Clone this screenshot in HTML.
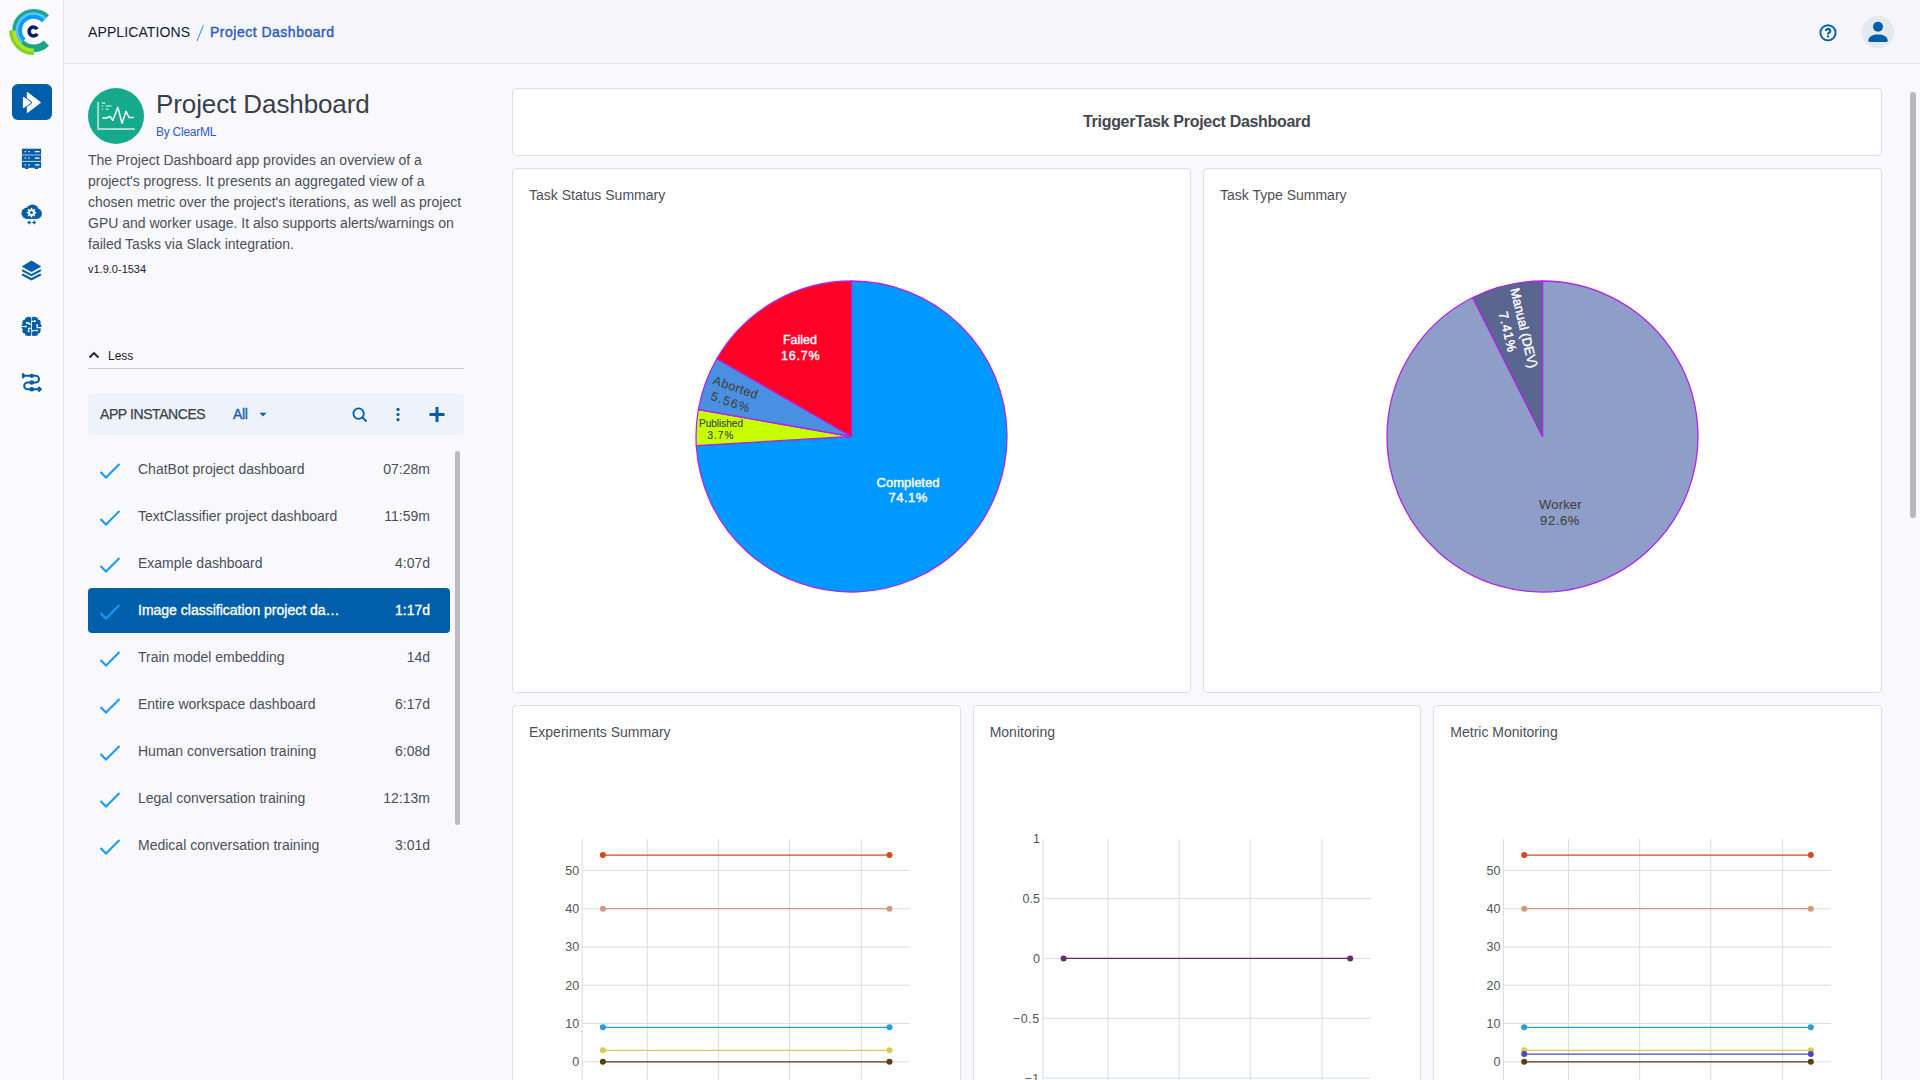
<!DOCTYPE html><html><head><meta charset="utf-8"><style>
*{box-sizing:border-box;margin:0;padding:0}
html,body{width:1920px;height:1080px;overflow:hidden;background:#f9f9fd;font-family:"Liberation Sans", sans-serif}
.a{position:absolute}
.t{position:absolute;white-space:nowrap;line-height:1}
.card{position:absolute;background:#fff;border:1px solid #dcdfe3;border-radius:4px}
</style></head><body><div class="a" style="left:0;top:0;width:64px;height:1080px;background:#fbfbfd;border-right:1px solid #e3e6ef"></div>
<div class="a" style="left:64px;top:0;width:1856px;height:64px;background:#f5f5fa;border-bottom:1px solid #e3e6ef"></div>
<svg class="a" style="left:0;top:0" width="64" height="64" viewBox="0 0 64 64"><path d="M46.35,17.95 A17.75,17.75 0 1 0 46.35,43.05" fill="none" stroke="#17a58b" stroke-width="7.5"/><path d="M45.50,18.80 A16.55,16.55 0 1 0 22.10,42.20" fill="none" stroke="#5bc0fb" stroke-width="2.9"/><path d="M43.20,21.10 A13.3,13.3 0 1 0 24.40,39.90" fill="none" stroke="#0a9bf7" stroke-width="3.6"/><path d="M10.75,30.50 A23.05,23.05 0 0 0 33.80,53.55" fill="none" stroke="#7ed321" stroke-width="3.1"/><path d="M14.05,30.50 A19.75,19.75 0 0 0 33.80,50.25" fill="none" stroke="#b6e41a" stroke-width="3.5"/><path d="M37.23,29.17 A4.4,4.4 0 1 0 37.23,33.83" fill="none" stroke="#0c1a6b" stroke-width="3.5"/></svg>
<div class="a" style="left:12px;top:84px;width:40px;height:36px;background:#005eaa;border-radius:6px"></div>
<svg class="a" style="left:12px;top:84px" width="40" height="36" viewBox="0 0 40 36">
<path d="M15.4,8.6 L28.2,18.5 L15.4,28.4 Z" fill="#fff" stroke="#fff" stroke-width="1.2" stroke-linejoin="round"/>
<path d="M11.5,13.6 L18.4,18.5 L11.5,23.4 Z" fill="#005eaa" stroke="#005eaa" stroke-width="3" stroke-linejoin="round"/>
<path d="M11.5,13.6 L18.4,18.5 L11.5,23.4 Z" fill="#fff" stroke="#fff" stroke-width="1.2" stroke-linejoin="round"/>
</svg>
<svg class="a" style="left:21px;top:147px" width="22" height="24" viewBox="0 0 22 24">
<rect x="0.9" y="1.7" width="19.2" height="19.15" fill="#005eaa"/>
<rect x="0.9" y="7.1" width="19.2" height="1.7" fill="#6d9bc3"/>
<rect x="0.9" y="13.9" width="19.2" height="1" fill="#c5d3e0"/>
<rect x="3.9" y="20.5" width="3.6" height="1.5" rx="0.4" fill="#005eaa"/><rect x="13.6" y="20.5" width="3.7" height="1.5" rx="0.4" fill="#005eaa"/>
<g fill="#fff"><rect x="3.75" y="3.95" width="1.3" height="1.3"/><rect x="7.35" y="3.95" width="1.3" height="1.3"/><rect x="13.85" y="3.95" width="4.65" height="1.3"/>
<rect x="3.75" y="10.45" width="1.3" height="1.3"/><rect x="7.35" y="10.45" width="1.3" height="1.3"/><rect x="13.85" y="10.45" width="4.65" height="1.3"/>
<rect x="3.75" y="17.25" width="1.3" height="1.3"/><rect x="7.35" y="17.25" width="1.3" height="1.3"/><rect x="13.85" y="17.25" width="4.65" height="1.3"/></g>
</svg>
<svg class="a" style="left:18px;top:200px" width="28" height="28" viewBox="0 0 28 28">
<g fill="#005eaa"><circle cx="9.2" cy="13.2" r="5.7"/><circle cx="14.5" cy="10.6" r="6.2"/><circle cx="18.6" cy="13.6" r="5.3"/><rect x="9.2" y="12" width="9.4" height="6.9"/></g>
<circle cx="13.5" cy="12.6" r="3.3" fill="#fff"/><rect x="12.7" y="7.9" width="1.6" height="2.2" fill="#fff" transform="rotate(0 13.5 12.6)"/><rect x="12.7" y="7.9" width="1.6" height="2.2" fill="#fff" transform="rotate(45 13.5 12.6)"/><rect x="12.7" y="7.9" width="1.6" height="2.2" fill="#fff" transform="rotate(90 13.5 12.6)"/><rect x="12.7" y="7.9" width="1.6" height="2.2" fill="#fff" transform="rotate(135 13.5 12.6)"/><rect x="12.7" y="7.9" width="1.6" height="2.2" fill="#fff" transform="rotate(180 13.5 12.6)"/><rect x="12.7" y="7.9" width="1.6" height="2.2" fill="#fff" transform="rotate(225 13.5 12.6)"/><rect x="12.7" y="7.9" width="1.6" height="2.2" fill="#fff" transform="rotate(270 13.5 12.6)"/><rect x="12.7" y="7.9" width="1.6" height="2.2" fill="#fff" transform="rotate(315 13.5 12.6)"/>
<circle cx="13.5" cy="12.6" r="1.5" fill="#005eaa"/>
<path d="M8.850000000000001,22.55 Q10.575000000000001,21.975 11.15,20.25 Q11.725,21.975 13.45,22.55 Q11.725,23.125 11.15,24.85 Q10.575000000000001,23.125 8.850000000000001,22.55 Z M13.899999999999999,22.55 Q15.625,21.975 16.2,20.25 Q16.775,21.975 18.5,22.55 Q16.775,23.125 16.2,24.85 Q15.625,23.125 13.899999999999999,22.55 Z" fill="#005eaa"/>
</svg>
<svg class="a" style="left:21px;top:259px" width="22" height="23" viewBox="0 0 22 23">
<path d="M10.5,2 L19.6,7.5 L10.5,12.6 L1.4,7.5 Z" fill="#005eaa" stroke="#005eaa" stroke-width="0.9" stroke-linejoin="round"/>
<path d="M1.9,11.6 L10.5,16.1 L19.1,11.6" fill="none" stroke="#005eaa" stroke-width="2.2" stroke-linecap="round" stroke-linejoin="round"/>
<path d="M1.9,15.8 L10.5,20.3 L19.1,15.8" fill="none" stroke="#005eaa" stroke-width="2.2" stroke-linecap="round" stroke-linejoin="round"/>
</svg>
<svg class="a" style="left:18px;top:312px" width="28" height="28" viewBox="0 0 28 28">
<g fill="#005eaa"><circle cx="10.60" cy="7.9" r="3.1"/><circle cx="7.60" cy="10.8" r="3.3"/><circle cx="6.20" cy="14.6" r="2.8"/><circle cx="7.60" cy="18.4" r="3.2"/><circle cx="10.60" cy="20.8" r="3.1"/><rect x="7.20" y="6" width="6" height="17.5"/><circle cx="16.40" cy="7.9" r="3.1"/><circle cx="19.40" cy="10.8" r="3.3"/><circle cx="20.80" cy="14.6" r="2.8"/><circle cx="19.40" cy="18.4" r="3.2"/><circle cx="16.40" cy="20.8" r="3.1"/><rect x="13.80" y="6" width="6" height="17.5"/></g>
<line x1="13.5" y1="4" x2="13.5" y2="25" stroke="#fbfbfd" stroke-width="0.6"/>
<g fill="none" stroke="#fff" stroke-width="1.1">
<path d="M3.2,14.5 H7.8"/><path d="M8.8,10.9 H11.1 V12.4 H13.2"/><path d="M13.2,16.3 H10.6 V19.2"/>
<path d="M13.8,9.3 H16.85"/><path d="M19.2,13.2 V15.6 H24"/><path d="M13.8,20 L15,18.5 H18.9"/>
</g>
<g fill="#fff"><circle cx="7.8" cy="14.5" r="1"/><circle cx="8.8" cy="10.9" r="1"/><circle cx="10.6" cy="19.2" r="1"/><circle cx="16.85" cy="8.9" r="1"/><circle cx="19.2" cy="13.2" r="1"/><circle cx="18.9" cy="18.5" r="1"/></g>
</svg>
<svg class="a" style="left:21px;top:371px" width="22" height="23" viewBox="0 0 22 23">
<path d="M1,4.8 H14.65 A3.35,3.35 0 0 1 14.65,11.5 H6.6 A3.4,3.4 0 0 0 6.6,18.3 H19.5" fill="none" stroke="#005eaa" stroke-width="2"/>
<g fill="#005eaa"><ellipse cx="10.75" cy="4.8" rx="2.4" ry="2.1"/><ellipse cx="10.75" cy="11.5" rx="2.4" ry="2.2"/><ellipse cx="10.75" cy="18.3" rx="2.4" ry="2.2"/></g>
<path d="M1.3,2.4 L3.6,4.8 L1.3,7.2" fill="none" stroke="#005eaa" stroke-width="1.9" stroke-linejoin="round"/>
<path d="M17.2,16 L19.9,18.3 L17.2,20.6" fill="none" stroke="#005eaa" stroke-width="2" stroke-linejoin="round"/>
</svg>
<div class="t" style="left:88px;top:25px;font-size:14px;color:#131b36;letter-spacing:0.1px">APPLICATIONS</div>
<svg class="a" style="left:194px;top:23px" width="12" height="20"><line x1="9.5" y1="2" x2="3" y2="18" stroke="#4b9fe0" stroke-width="1.1"/></svg>
<div class="t" style="left:210px;top:25px;font-size:14px;font-weight:400;color:#2a5cc4;letter-spacing:0.5px;-webkit-text-stroke:0.4px #2a5cc4">Project Dashboard</div>
<svg class="a" style="left:1818px;top:23px" width="20" height="20" viewBox="0 0 20 20">
<circle cx="10" cy="9.8" r="7.6" fill="none" stroke="#005eaa" stroke-width="1.9"/>
<path d="M8,7.9 A2.1,2.0 0 1 1 11,9.7 C10.3,10.1 10,10.5 10,11.4" fill="none" stroke="#005eaa" stroke-width="2.1"/>
<circle cx="10" cy="13.5" r="1.15" fill="#005eaa"/>
</svg>
<div class="a" style="left:1862px;top:16px;width:32px;height:32px;border-radius:50%;background:#e4e8f1"></div>
<svg class="a" style="left:1862px;top:16px" width="32" height="32" viewBox="0 0 32 32">
<circle cx="16" cy="10.8" r="5" fill="#005eaa"/>
<path d="M6.3,24.3 C6.6,20.6 11,18.6 16,18.6 C21,18.6 25.4,20.6 25.7,24.3 Q25.8,26 24.2,26 H7.8 Q6.2,26 6.3,24.3 Z" fill="#005eaa"/>
</svg>
<div class="a" style="left:88px;top:88px;width:56px;height:56px;border-radius:50%;background:#15aa8c"></div>
<svg class="a" style="left:88px;top:88px" width="56" height="56" viewBox="0 0 56 56">
<path d="M10.1,14.8 V41 H46.1" fill="none" stroke="#a3ddd0" stroke-width="1.9" stroke-linejoin="round" stroke-linecap="round"/>
<path d="M14.8,30 H18.7 L21.8,28.3 L24.8,32.4 L29.8,19.2 L34,35.3 L38.1,23.3 L41,29.5 H45.4" fill="none" stroke="#f4fbf9" stroke-width="1.5" stroke-linejoin="round" stroke-linecap="round"/>
<g fill="#a3ddd0"><rect x="13.7" y="14.3" width="3.7" height="1.6" rx="0.5"/><rect x="13.7" y="17.3" width="1.6" height="1.5" rx="0.4"/><rect x="17.6" y="17.3" width="6" height="1.5" rx="0.5"/><rect x="13.7" y="20.4" width="1.6" height="1.5" rx="0.4"/><rect x="17.6" y="20.4" width="3.1" height="1.5" rx="0.5"/></g>
</svg>
<div class="t" style="left:156px;top:91px;font-size:26px;color:#3a3e48;letter-spacing:-0.1px">Project Dashboard</div>
<div class="t" style="left:156px;top:126px;font-size:12px;color:#2f58cf;letter-spacing:-0.25px">By ClearML</div>
<div class="t" style="left:88px;top:153px;font-size:14px;color:#4b4f5a">The Project Dashboard app provides an overview of a</div>
<div class="t" style="left:88px;top:174px;font-size:14px;color:#4b4f5a">project's progress. It presents an aggregated view of a</div>
<div class="t" style="left:88px;top:195px;font-size:14px;color:#4b4f5a">chosen metric over the project's iterations, as well as project</div>
<div class="t" style="left:88px;top:216px;font-size:14px;color:#4b4f5a">GPU and worker usage. It also supports alerts/warnings on</div>
<div class="t" style="left:88px;top:237px;font-size:14px;color:#4b4f5a">failed Tasks via Slack integration.</div>
<div class="t" style="left:88px;top:264px;font-size:11px;color:#1b2033">v1.9.0-1534</div>
<svg class="a" style="left:88px;top:350px" width="12" height="10"><path d="M1.5,7.5 L6,3 L10.5,7.5" fill="none" stroke="#1b2033" stroke-width="1.8"/></svg>
<div class="t" style="left:108px;top:350px;font-size:12px;color:#1b2033">Less</div>
<div class="a" style="left:88px;top:368px;width:376px;height:1px;background:#c8ccd5"></div>
<div class="a" style="left:88px;top:393px;width:376px;height:42px;background:#eef2fa;border-radius:4px"></div>
<div class="t" style="left:100px;top:407px;font-size:14px;font-weight:400;color:#3d414c;letter-spacing:-0.42px;-webkit-text-stroke:0.25px #3d414c">APP INSTANCES</div>
<div class="t" style="left:233px;top:407px;font-size:14px;font-weight:400;color:#1a5fb4;letter-spacing:-0.4px;-webkit-text-stroke:0.4px #1a5fb4">All</div>
<svg class="a" style="left:258px;top:411px" width="10" height="7"><path d="M1.5,1.8 H8.5 L5,5.6 Z" fill="#005eaa"/></svg>
<svg class="a" style="left:351px;top:406px" width="18" height="18" viewBox="0 0 18 18">
<circle cx="7.6" cy="7.6" r="5.2" fill="none" stroke="#005eaa" stroke-width="1.8"/><line x1="11.4" y1="11.4" x2="15.5" y2="15.5" stroke="#005eaa" stroke-width="2"/></svg>
<svg class="a" style="left:394px;top:406px" width="8" height="18"><circle cx="4" cy="3.3" r="1.6" fill="#005eaa"/><circle cx="4" cy="8.5" r="1.6" fill="#005eaa"/><circle cx="4" cy="13.7" r="1.6" fill="#005eaa"/></svg>
<svg class="a" style="left:428px;top:405px" width="18" height="18"><path d="M9,2 V17 M1.5,9.5 H16.5" stroke="#005eaa" stroke-width="3"/></svg>
<svg class="a" style="left:98px;top:463px" width="24" height="18"><path d="M2.5,9 L8,14.5 L21.5,1" fill="none" stroke="#149bf5" stroke-width="2.1"/></svg>
<div class="t" style="left:138px;top:462px;font-size:14px;color:#4a4e59;">ChatBot project dashboard</div>
<div class="t" style="right:1490px;top:462px;font-size:14px;color:#4a4e59;">07:28m</div>
<svg class="a" style="left:98px;top:510px" width="24" height="18"><path d="M2.5,9 L8,14.5 L21.5,1" fill="none" stroke="#149bf5" stroke-width="2.1"/></svg>
<div class="t" style="left:138px;top:509px;font-size:14px;color:#4a4e59;">TextClassifier project dashboard</div>
<div class="t" style="right:1490px;top:509px;font-size:14px;color:#4a4e59;">11:59m</div>
<svg class="a" style="left:98px;top:557px" width="24" height="18"><path d="M2.5,9 L8,14.5 L21.5,1" fill="none" stroke="#149bf5" stroke-width="2.1"/></svg>
<div class="t" style="left:138px;top:556px;font-size:14px;color:#4a4e59;">Example dashboard</div>
<div class="t" style="right:1490px;top:556px;font-size:14px;color:#4a4e59;">4:07d</div>
<div class="a" style="left:88px;top:588px;width:362px;height:45px;background:#005eaa;border-radius:4px"></div>
<svg class="a" style="left:98px;top:604px" width="24" height="18"><path d="M2.5,9 L8,14.5 L21.5,1" fill="none" stroke="#149bf5" stroke-width="2.1"/></svg>
<div class="t" style="left:138px;top:603px;font-size:14px;color:#ffffff;-webkit-text-stroke:0.35px #fff;">Image classification project da…</div>
<div class="t" style="right:1490px;top:603px;font-size:14px;color:#ffffff;-webkit-text-stroke:0.35px #fff;">1:17d</div>
<svg class="a" style="left:98px;top:651px" width="24" height="18"><path d="M2.5,9 L8,14.5 L21.5,1" fill="none" stroke="#149bf5" stroke-width="2.1"/></svg>
<div class="t" style="left:138px;top:650px;font-size:14px;color:#4a4e59;">Train model embedding</div>
<div class="t" style="right:1490px;top:650px;font-size:14px;color:#4a4e59;">14d</div>
<svg class="a" style="left:98px;top:698px" width="24" height="18"><path d="M2.5,9 L8,14.5 L21.5,1" fill="none" stroke="#149bf5" stroke-width="2.1"/></svg>
<div class="t" style="left:138px;top:697px;font-size:14px;color:#4a4e59;">Entire workspace dashboard</div>
<div class="t" style="right:1490px;top:697px;font-size:14px;color:#4a4e59;">6:17d</div>
<svg class="a" style="left:98px;top:745px" width="24" height="18"><path d="M2.5,9 L8,14.5 L21.5,1" fill="none" stroke="#149bf5" stroke-width="2.1"/></svg>
<div class="t" style="left:138px;top:744px;font-size:14px;color:#4a4e59;">Human conversation training</div>
<div class="t" style="right:1490px;top:744px;font-size:14px;color:#4a4e59;">6:08d</div>
<svg class="a" style="left:98px;top:792px" width="24" height="18"><path d="M2.5,9 L8,14.5 L21.5,1" fill="none" stroke="#149bf5" stroke-width="2.1"/></svg>
<div class="t" style="left:138px;top:791px;font-size:14px;color:#4a4e59;">Legal conversation training</div>
<div class="t" style="right:1490px;top:791px;font-size:14px;color:#4a4e59;">12:13m</div>
<svg class="a" style="left:98px;top:839px" width="24" height="18"><path d="M2.5,9 L8,14.5 L21.5,1" fill="none" stroke="#149bf5" stroke-width="2.1"/></svg>
<div class="t" style="left:138px;top:838px;font-size:14px;color:#4a4e59;">Medical conversation training</div>
<div class="t" style="right:1490px;top:838px;font-size:14px;color:#4a4e59;">3:01d</div>
<div class="a" style="left:455px;top:451px;width:5px;height:374px;background:#b9b9bf;border-radius:3px"></div>
<div class="a" style="left:1910px;top:92px;width:6px;height:426px;background:#b9b8be;border-radius:3px"></div>
<div class="card" style="left:512px;top:88px;width:1370px;height:68px"></div>
<div class="t" style="left:1083px;top:114px;font-size:16px;font-weight:700;color:#43474f;letter-spacing:-0.3px">TriggerTask Project Dashboard</div>
<div class="card" style="left:512px;top:168px;width:679px;height:525px"></div>
<div class="t" style="left:529px;top:188px;font-size:14px;color:#4b4f58">Task Status Summary</div>
<div class="card" style="left:1203px;top:168px;width:679px;height:525px"></div>
<div class="t" style="left:1220px;top:188px;font-size:14px;color:#4b4f58">Task Type Summary</div>
<div class="card" style="left:512.00px;top:705px;width:448.67px;height:420px"></div>
<div class="t" style="left:529.00px;top:725px;font-size:14px;color:#4b4f58">Experiments Summary</div>
<div class="card" style="left:972.67px;top:705px;width:448.67px;height:420px"></div>
<div class="t" style="left:989.67px;top:725px;font-size:14px;color:#4b4f58">Monitoring</div>
<div class="card" style="left:1433.33px;top:705px;width:448.67px;height:420px"></div>
<div class="t" style="left:1450.33px;top:725px;font-size:14px;color:#4b4f58">Metric Monitoring</div>
<svg class="a" style="left:0;top:0" width="1920" height="1080"><path d="M851.50,436.50 L851.50,281.00 A155.5,155.5 0 1 1 696.26,445.54 Z" fill="#0099ff" stroke="#b026e6" stroke-width="1.3" stroke-linejoin="round"/><path d="M851.50,436.50 L696.26,445.54 A155.5,155.5 0 0 1 698.36,409.50 Z" fill="#c8ff00" stroke="#b026e6" stroke-width="1.3" stroke-linejoin="round"/><path d="M851.50,436.50 L698.36,409.50 A155.5,155.5 0 0 1 716.83,358.75 Z" fill="#4a90e2" stroke="#b026e6" stroke-width="1.3" stroke-linejoin="round"/><path d="M851.50,436.50 L716.83,358.75 A155.5,155.5 0 0 1 851.50,281.00 Z" fill="#ff0026" stroke="#b026e6" stroke-width="1.3" stroke-linejoin="round"/></svg>
<svg class="a" style="left:0;top:0" width="1920" height="1080"><path d="M1542.50,436.50 L1542.50,281.00 A155.5,155.5 0 1 1 1472.71,297.54 Z" fill="#8f9ec8" stroke="#b026e6" stroke-width="1.3" stroke-linejoin="round"/><path d="M1542.50,436.50 L1472.71,297.54 A155.5,155.5 0 0 1 1542.50,281.00 Z" fill="#5a6590" stroke="#b026e6" stroke-width="1.3" stroke-linejoin="round"/></svg>
<svg class="a" style="left:0;top:0" width="1920" height="1080" font-family="Liberation Sans, sans-serif"><text x="800.00" y="343.70" font-size="12.5" fill="#fff" stroke="#fff" stroke-width="0.4" text-anchor="middle">Failed</text><text x="800.67" y="359.50" font-size="12.5" fill="#fff" stroke="#fff" stroke-width="0.4" text-anchor="middle" letter-spacing="0.75">16.7%</text><text x="908.00" y="486.90" font-size="13" fill="#fff" stroke="#fff" stroke-width="0.4" text-anchor="middle">Completed</text><text x="908.15" y="501.70" font-size="13" fill="#fff" stroke="#fff" stroke-width="0.4" text-anchor="middle" letter-spacing="0.5">74.1%</text><g transform="translate(733 394.5) rotate(19)"><text x="0.23" y="-3.30" font-size="12.5" fill="#444" stroke="#444" stroke-width="0.15" text-anchor="middle" letter-spacing="0.45">Aborted</text><text x="0.57" y="12.30" font-size="12.5" fill="#444" stroke="#444" stroke-width="0.15" text-anchor="middle" letter-spacing="1.15">5.56%</text></g><text x="721.00" y="427.20" font-size="10" fill="#444" stroke="#444" stroke-width="0.15" text-anchor="middle">Published</text><text x="720.90" y="438.70" font-size="10" fill="#444" stroke="#444" stroke-width="0.15" text-anchor="middle" letter-spacing="1.0">3.7%</text><text x="1560.38" y="508.70" font-size="13" fill="#444" stroke="#444" stroke-width="0.15" text-anchor="middle" letter-spacing="0.15">Worker</text><text x="1560.00" y="524.50" font-size="13" fill="#444" stroke="#444" stroke-width="0.15" text-anchor="middle" letter-spacing="0.6">92.6%</text><g transform="translate(1516 329.8) rotate(76.7)"><text x="0.00" y="-3.72" font-size="13" fill="#fff" stroke="#fff" stroke-width="0.4" text-anchor="middle">Manual (DEV)</text><text x="0.45" y="13.08" font-size="13" fill="#fff" stroke="#fff" stroke-width="0.4" text-anchor="middle" letter-spacing="0.9">7.41%</text></g></svg>
<svg class="a" style="left:0;top:0" width="1920" height="1080" font-family="Liberation Sans, sans-serif"><line x1="582.2" y1="839" x2="582.2" y2="1080" stroke="#d9dcea" stroke-width="1"/><line x1="647.3" y1="839" x2="647.3" y2="1080" stroke="#d9dcea" stroke-width="1"/><line x1="718.4" y1="839" x2="718.4" y2="1080" stroke="#d9dcea" stroke-width="1"/><line x1="789.5" y1="839" x2="789.5" y2="1080" stroke="#d9dcea" stroke-width="1"/><line x1="861.3" y1="839" x2="861.3" y2="1080" stroke="#d9dcea" stroke-width="1"/><line x1="582.2" y1="870.4" x2="909.7" y2="870.4" stroke="#d9dcea" stroke-width="1"/><text x="579.2" y="874.7" font-size="12.5" fill="#555" text-anchor="end">50</text><line x1="582.2" y1="908.7" x2="909.7" y2="908.7" stroke="#d9dcea" stroke-width="1"/><text x="579.2" y="913.0" font-size="12.5" fill="#555" text-anchor="end">40</text><line x1="582.2" y1="947.0" x2="909.7" y2="947.0" stroke="#d9dcea" stroke-width="1"/><text x="579.2" y="951.3" font-size="12.5" fill="#555" text-anchor="end">30</text><line x1="582.2" y1="985.2" x2="909.7" y2="985.2" stroke="#d9dcea" stroke-width="1"/><text x="579.2" y="989.5" font-size="12.5" fill="#555" text-anchor="end">20</text><line x1="582.2" y1="1023.5" x2="909.7" y2="1023.5" stroke="#d9dcea" stroke-width="1"/><text x="579.2" y="1027.8" font-size="12.5" fill="#555" text-anchor="end">10</text><line x1="582.2" y1="1061.8" x2="909.7" y2="1061.8" stroke="#d9dcea" stroke-width="1"/><text x="579.2" y="1066.1" font-size="12.5" fill="#555" text-anchor="end">0</text><line x1="602.9" y1="855.1" x2="889.5" y2="855.1" stroke="#d9481e" stroke-width="1.2"/><circle cx="602.9" cy="855.1" r="3" fill="#d9481e"/><circle cx="889.5" cy="855.1" r="3" fill="#d9481e"/><line x1="602.9" y1="908.7" x2="889.5" y2="908.7" stroke="#d4997a" stroke-width="1.2"/><circle cx="602.9" cy="908.7" r="3" fill="#d4997a"/><circle cx="889.5" cy="908.7" r="3" fill="#d4997a"/><line x1="602.9" y1="1027.3" x2="889.5" y2="1027.3" stroke="#2a9fd6" stroke-width="1.2"/><circle cx="602.9" cy="1027.3" r="3" fill="#2a9fd6"/><circle cx="889.5" cy="1027.3" r="3" fill="#2a9fd6"/><line x1="602.9" y1="1050.3" x2="889.5" y2="1050.3" stroke="#dccb4f" stroke-width="1.2"/><circle cx="602.9" cy="1050.3" r="3" fill="#dccb4f"/><circle cx="889.5" cy="1050.3" r="3" fill="#dccb4f"/><line x1="602.9" y1="1061.8" x2="889.5" y2="1061.8" stroke="#5c3d12" stroke-width="1.2"/><circle cx="602.9" cy="1061.8" r="3" fill="#5c3d12"/><circle cx="889.5" cy="1061.8" r="3" fill="#5c3d12"/></svg>
<svg class="a" style="left:0;top:0" width="1920" height="1080" font-family="Liberation Sans, sans-serif"><line x1="1042.9" y1="839" x2="1042.9" y2="1080" stroke="#d9dcea" stroke-width="1"/><line x1="1108.0" y1="839" x2="1108.0" y2="1080" stroke="#d9dcea" stroke-width="1"/><line x1="1179.1" y1="839" x2="1179.1" y2="1080" stroke="#d9dcea" stroke-width="1"/><line x1="1250.2" y1="839" x2="1250.2" y2="1080" stroke="#d9dcea" stroke-width="1"/><line x1="1322.0" y1="839" x2="1322.0" y2="1080" stroke="#d9dcea" stroke-width="1"/><text x="1039.9" y="843.1" font-size="12.5" fill="#555" text-anchor="end">1</text><line x1="1042.9" y1="898.6" x2="1370.4" y2="898.6" stroke="#d9dcea" stroke-width="1"/><text x="1039.9" y="902.9" font-size="12.5" fill="#555" text-anchor="end">0.5</text><line x1="1042.9" y1="958.4" x2="1370.4" y2="958.4" stroke="#d9dcea" stroke-width="1"/><text x="1039.9" y="962.7" font-size="12.5" fill="#555" text-anchor="end">0</text><line x1="1042.9" y1="1018.3" x2="1370.4" y2="1018.3" stroke="#d9dcea" stroke-width="1"/><text x="1039.9" y="1022.6" font-size="12.5" fill="#555" text-anchor="end" letter-spacing="0.6">−0.5</text><line x1="1042.9" y1="1078.2" x2="1370.4" y2="1078.2" stroke="#d9dcea" stroke-width="1"/><text x="1039.9" y="1082.5" font-size="12.5" fill="#555" text-anchor="end" letter-spacing="0.6">−1</text><line x1="1063.6" y1="958.4" x2="1350.2" y2="958.4" stroke="#6b2a6e" stroke-width="1.2"/><circle cx="1063.6" cy="958.4" r="3" fill="#6b2a6e"/><circle cx="1350.2" cy="958.4" r="3" fill="#6b2a6e"/></svg>
<svg class="a" style="left:0;top:0" width="1920" height="1080" font-family="Liberation Sans, sans-serif"><line x1="1503.5" y1="839" x2="1503.5" y2="1080" stroke="#d9dcea" stroke-width="1"/><line x1="1568.6" y1="839" x2="1568.6" y2="1080" stroke="#d9dcea" stroke-width="1"/><line x1="1639.7" y1="839" x2="1639.7" y2="1080" stroke="#d9dcea" stroke-width="1"/><line x1="1710.8" y1="839" x2="1710.8" y2="1080" stroke="#d9dcea" stroke-width="1"/><line x1="1782.6" y1="839" x2="1782.6" y2="1080" stroke="#d9dcea" stroke-width="1"/><line x1="1503.5" y1="870.4" x2="1831.0" y2="870.4" stroke="#d9dcea" stroke-width="1"/><text x="1500.5" y="874.7" font-size="12.5" fill="#555" text-anchor="end">50</text><line x1="1503.5" y1="908.7" x2="1831.0" y2="908.7" stroke="#d9dcea" stroke-width="1"/><text x="1500.5" y="913.0" font-size="12.5" fill="#555" text-anchor="end">40</text><line x1="1503.5" y1="947.0" x2="1831.0" y2="947.0" stroke="#d9dcea" stroke-width="1"/><text x="1500.5" y="951.3" font-size="12.5" fill="#555" text-anchor="end">30</text><line x1="1503.5" y1="985.2" x2="1831.0" y2="985.2" stroke="#d9dcea" stroke-width="1"/><text x="1500.5" y="989.5" font-size="12.5" fill="#555" text-anchor="end">20</text><line x1="1503.5" y1="1023.5" x2="1831.0" y2="1023.5" stroke="#d9dcea" stroke-width="1"/><text x="1500.5" y="1027.8" font-size="12.5" fill="#555" text-anchor="end">10</text><line x1="1503.5" y1="1061.8" x2="1831.0" y2="1061.8" stroke="#d9dcea" stroke-width="1"/><text x="1500.5" y="1066.1" font-size="12.5" fill="#555" text-anchor="end">0</text><line x1="1524.2" y1="855.1" x2="1810.8" y2="855.1" stroke="#d9481e" stroke-width="1.2"/><circle cx="1524.2" cy="855.1" r="3" fill="#d9481e"/><circle cx="1810.8" cy="855.1" r="3" fill="#d9481e"/><line x1="1524.2" y1="908.7" x2="1810.8" y2="908.7" stroke="#d4997a" stroke-width="1.2"/><circle cx="1524.2" cy="908.7" r="3" fill="#d4997a"/><circle cx="1810.8" cy="908.7" r="3" fill="#d4997a"/><line x1="1524.2" y1="1027.3" x2="1810.8" y2="1027.3" stroke="#2a9fd6" stroke-width="1.2"/><circle cx="1524.2" cy="1027.3" r="3" fill="#2a9fd6"/><circle cx="1810.8" cy="1027.3" r="3" fill="#2a9fd6"/><line x1="1524.2" y1="1050.3" x2="1810.8" y2="1050.3" stroke="#dccb4f" stroke-width="1.2"/><circle cx="1524.2" cy="1050.3" r="3" fill="#dccb4f"/><circle cx="1810.8" cy="1050.3" r="3" fill="#dccb4f"/><line x1="1524.2" y1="1054.1" x2="1810.8" y2="1054.1" stroke="#4848c8" stroke-width="1.2"/><circle cx="1524.2" cy="1054.1" r="3" fill="#4848c8"/><circle cx="1810.8" cy="1054.1" r="3" fill="#4848c8"/><line x1="1524.2" y1="1061.8" x2="1810.8" y2="1061.8" stroke="#5c3d12" stroke-width="1.2"/><circle cx="1524.2" cy="1061.8" r="3" fill="#5c3d12"/><circle cx="1810.8" cy="1061.8" r="3" fill="#5c3d12"/></svg></body></html>
